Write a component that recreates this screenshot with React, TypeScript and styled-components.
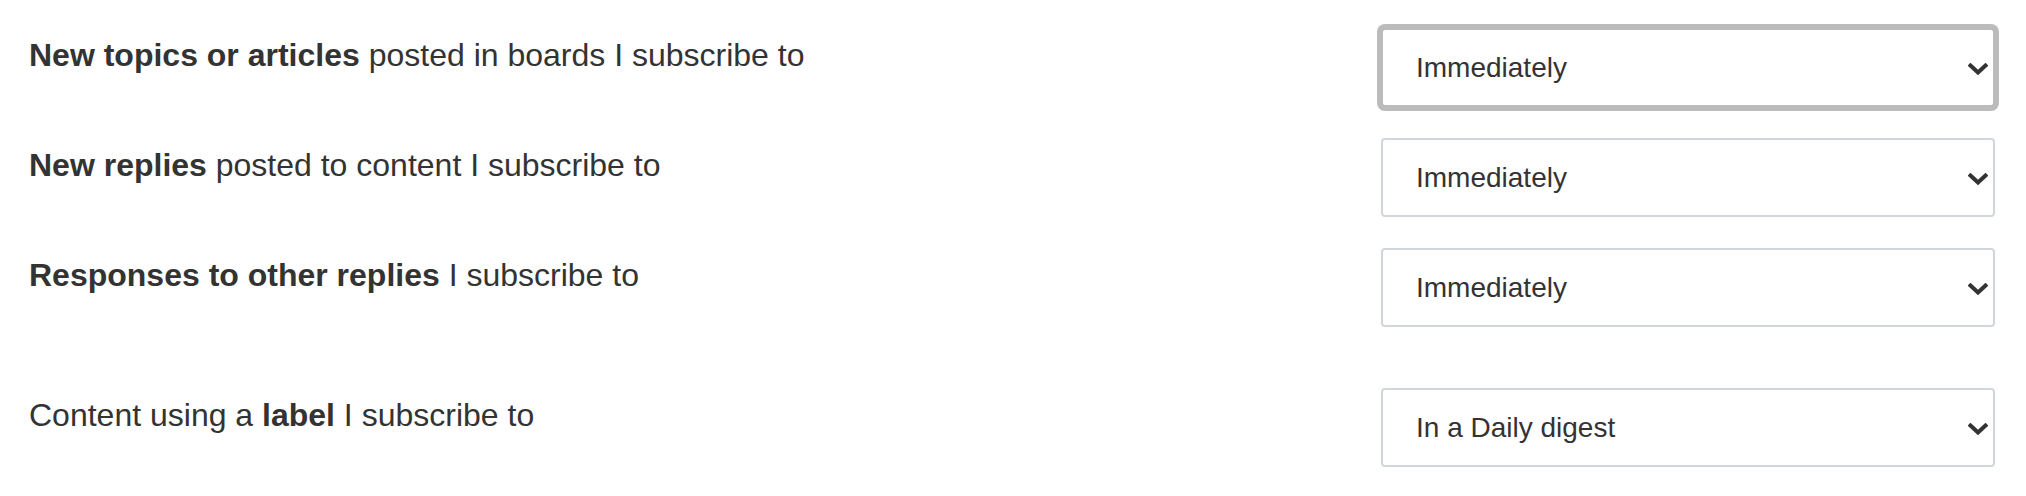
import styled, { createGlobalStyle } from "styled-components";

const GlobalStyle = createGlobalStyle`
  html, body {
    margin: 0;
    padding: 0;
    background: #fff;
  }
  body {
    font-family: "Liberation Sans", Arial, sans-serif;
    color: #333;
  }
`;

const Page = styled.div`
  display: flex;
  flex-direction: column;
  gap: 31px;
  padding: 28px 31px 0 29px;
`;

const Row = styled.div<{ $spaced?: boolean }>`
  display: flex;
  align-items: flex-start;
  justify-content: space-between;
  margin-top: ${(p) => (p.$spaced ? "30px" : "0")};
`;

const Label = styled.div`
  padding-top: 3px;
  font-size: 32px;
  line-height: 48px;
  color: #333;

  b {
    font-weight: 700;
  }
`;

const SelectWrap = styled.div`
  position: relative;
  width: 614px;
  flex-shrink: 0;
`;

const Select = styled.select<{ $focused?: boolean }>`
  appearance: none;
  -webkit-appearance: none;
  width: 100%;
  height: 79px;
  box-sizing: border-box;
  padding: 0 60px 0 33px;
  border: 2px solid ${(p) => (p.$focused ? "#bbb" : "#d0d6d9")};
  border-radius: 4px;
  box-shadow: ${(p) => (p.$focused ? "0 0 0 4px #bbb" : "none")};
  background: #fff;
  font-family: "Liberation Sans", Arial, sans-serif;
  font-size: 28px;
  color: #333;
  outline: none;
`;

const Chevron = styled.svg`
  position: absolute;
  right: 7px;
  top: 50%;
  width: 20px;
  height: 12px;
  margin-top: -5px;
  pointer-events: none;
`;

const options = ["Immediately", "In a Daily digest", "In a Weekly digest", "Never"];

type Setting = {
  label: React.ReactNode;
  value: string;
  focused?: boolean;
  spaced?: boolean;
};

const settings: Setting[] = [
  {
    label: (
      <>
        <b>New topics or articles</b> posted in boards I subscribe to
      </>
    ),
    value: "Immediately",
    focused: true,
  },
  {
    label: (
      <>
        <b>New replies</b> posted to content I subscribe to
      </>
    ),
    value: "Immediately",
  },
  {
    label: (
      <>
        <b>Responses to other replies</b> I subscribe to
      </>
    ),
    value: "Immediately",
  },
  {
    label: (
      <>
        Content using a <b>label</b> I subscribe to
      </>
    ),
    value: "In a Daily digest",
    spaced: true,
  },
];

function App() {
  return (
    <>
      <GlobalStyle />
      <Page>
        {settings.map((s, i) => (
          <Row key={i} $spaced={s.spaced}>
            <Label>{s.label}</Label>
            <SelectWrap>
              <Select $focused={s.focused} defaultValue={s.value}>
                {options.map((o) => (
                  <option key={o}>{o}</option>
                ))}
              </Select>
              <Chevron viewBox="0 0 20 12">
                <path
                  d="M2.5 2.5 L10 9.5 L17.5 2.5"
                  fill="none"
                  stroke="#333"
                  strokeWidth="4"
                  strokeLinecap="square"
                />
              </Chevron>
            </SelectWrap>
          </Row>
        ))}
      </Page>
    </>
  );
}

export default App;
